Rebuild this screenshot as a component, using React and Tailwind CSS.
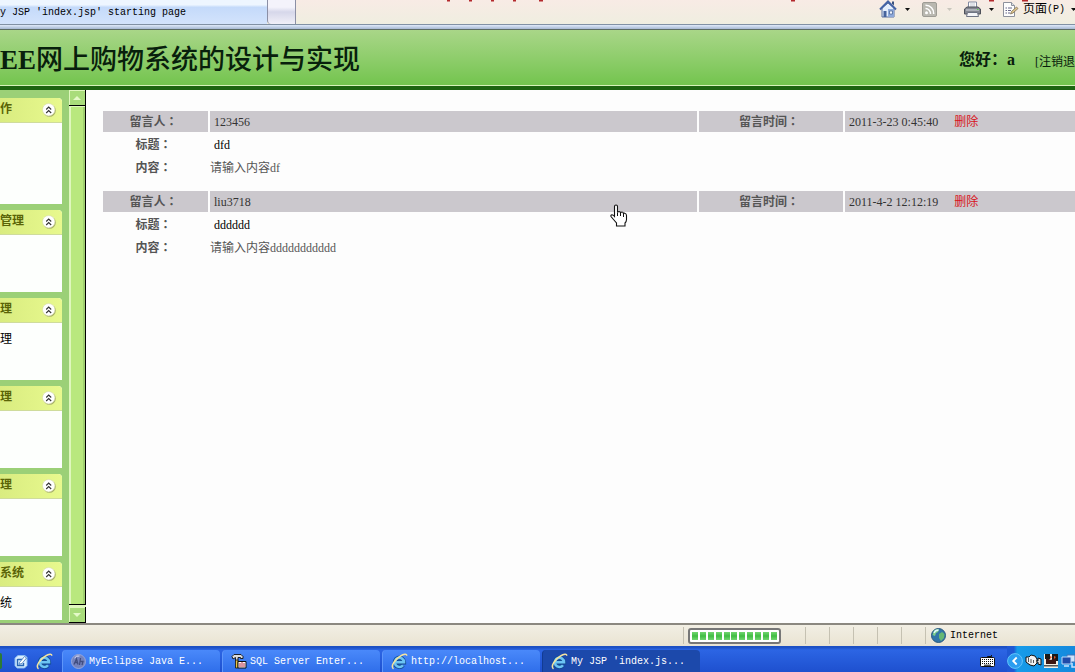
import React from "react";

const cjk = "font-['Liberation_Serif','Noto_Sans_CJK_SC',serif]";
const mono = "font-['Liberation_Mono','Noto_Sans_CJK_SC',monospace]";

function HomeIcon() {
  return (
    <svg width="18" height="18" viewBox="0 0 18 18" aria-hidden="true">
      <path d="M3 8v9h12V8L9 3z" fill="#e4eefc" stroke="#5b6f9d" />
      <path d="M9 9h6v8H9z" fill="#8ea9da" />
      <path d="M1 9.5 9 1.5l8 8" fill="none" stroke="#4463a5" strokeWidth="2" />
      <path d="M13 1.500h2v4l-2-2z" fill="#39517f" />
      <path d="M4.500 11h3v6h-3z" fill="#46639c" />
      <path d="M10.500 11h3v3h-3z" fill="#f4f8ff" stroke="#4f6898" strokeWidth=".8" />
    </svg>
  );
}

function FeedIcon() {
  return (
    <svg width="15" height="15" viewBox="0 0 15 15" aria-hidden="true">
      <rect x=".5" y=".5" width="14" height="14" rx="1.500" fill="#b9b8b0" stroke="#9d9c95" />
      <circle cx="4.500" cy="10.700" r="1.500" fill="#fff" />
      <path d="M3.500 6.500a5 5 0 0 1 5 5.500M3.500 3.300a8 8 0 0 1 8.200 8.700" fill="none" stroke="#fff" strokeWidth="1.500" />
    </svg>
  );
}

function PrinterIcon() {
  return (
    <svg width="17" height="17" viewBox="0 0 17 17" aria-hidden="true">
      <path d="M4.500 1h8v6h-8z" fill="#fff" stroke="#8189a0" />
      <path d="M6 3h5M6 5h5" stroke="#aeb5c4" strokeWidth=".8" />
      <path d="M.5 8 3 6h11l2.500 2v5H.5z" fill="#83868f" stroke="#4d505a" />
      <path d="M2 9h13" stroke="#d5d8e0" />
      <path d="M3.500 11.500h10l1 4h-12z" fill="#f4f5f8" stroke="#6e7484" />
      <path d="M13 8.500h1.500" stroke="#5ad04e" />
    </svg>
  );
}

function PageIcon() {
  return (
    <svg width="17" height="17" viewBox="0 0 17 17" aria-hidden="true">
      <path d="M1.500 1.500h8l3 3v11h-11z" fill="#fdfdfd" stroke="#8d919c" />
      <path d="M9.500 1.500v3h3" fill="#dde1e8" stroke="#8d919c" />
      <path d="M3.500 7h1.500M6 7h4M3.500 9.500h1.500M6 9.500h3M3.500 12h1.500M6 12h2" stroke="#668" />
      <path d="m8.500 13 1-2.500 5-4.500 1.500 1.500-5 4.500z" fill="#dfc58a" stroke="#7d705a" strokeWidth=".8" />
    </svg>
  );
}

function Caret({ faded }) {
  return (
    <svg width="5" height="3" viewBox="0 0 5 3" aria-hidden="true">
      <path d="M0 0h5L2.500 3z" fill={faded ? "#c9c6bd" : "#111"} />
    </svg>
  );
}

function IeIcon() {
  return (
    <svg width="17" height="17" viewBox="0 0 17 17" aria-hidden="true">
      <path d="M4.500 9.300H13A4.600 4.600 0 1 0 12 12.200" fill="none" stroke="#12488f" strokeWidth="4.200" />
      <path d="M4.500 9.300H13A4.600 4.600 0 1 0 12 12.200" fill="none" stroke="#6cc4f4" strokeWidth="2.600" />
      <path d="M2.500 15.800C-.8 13.500 4 6 9.500 3c3-1.800 6.800-2.800 6-.2" fill="none" stroke="#f3e3a0" strokeWidth="1.500" />
    </svg>
  );
}

function DesktopIcon() {
  return (
    <svg width="14" height="15" viewBox="0 0 14 15" aria-hidden="true">
      <path d="M1 4 4 1.500h7l2 2v8L10.500 14H3l-2-2.500z" fill="#d9edff" stroke="#8bbcf0" />
      <path d="M3.500 5.500h5M3.500 5v6.500h6V9" fill="none" stroke="#2766b5" strokeWidth="1.400" />
      <path d="M5.500 8.500 10.500 2.500l2 1.500L8 9.500l-3 .8z" fill="#fff" stroke="#3973bb" strokeWidth=".8" />
    </svg>
  );
}

function EclipseIcon() {
  return (
    <svg width="15" height="15" viewBox="0 0 15 15" aria-hidden="true">
      <circle cx="7.500" cy="7.500" r="7" fill="#7382bd" stroke="#98a6d9" />
      <path d="M3 10.500 5.500 5l1.500 5.500M4 8.500h3M8.500 11l1-7M8.500 7.500h3.500l-1 3.500" fill="none" stroke="#404d80" strokeWidth="1.300" />
      <path d="M3.500 4a5 5 0 0 1 5-2" fill="none" stroke="#e1e7fa" />
    </svg>
  );
}

function SqlIcon() {
  return (
    <svg width="16" height="16" viewBox="0 0 16 16" aria-hidden="true">
      <path d="M1 3.500 3 1.500h7l2 2v2H9.500v-1H7v3H4.500v-3L2 6z" fill="#ddd" stroke="#111" strokeWidth=".9" />
      <path d="M4.500 7H7v8H4.500z" fill="#e8c545" stroke="#111" strokeWidth=".8" />
      <path d="M7 8.500h8V15H7z" fill="#fff" stroke="#111" />
      <path d="M9 10v4M11 9v5M13 10v4" stroke="#b52a45" />
    </svg>
  );
}

function GlobeIcon() {
  return (
    <svg width="15" height="15" viewBox="0 0 15 15" aria-hidden="true">
      <circle cx="7.500" cy="7.500" r="7" fill="#3176a8" stroke="#28587f" />
      <path d="M3 2.500c2-1.500 4-1.500 5-1L7 4 5 5 4 8 1.500 7z" fill="#7ed08a" />
      <path d="M8 6l3-2 2.500 2-.5 4-3 3L8 10z" fill="#65b874" />
      <path d="M3 5c1-2.500 3-3 4.500-3" fill="none" stroke="#e0f7ff" strokeWidth="1.300" />
    </svg>
  );
}

function KeyboardIcon() {
  return (
    <svg width="15" height="12" viewBox="0 0 15 12" aria-hidden="true">
      <path d="M7.500 3V1.500h4V0" fill="none" stroke="#111" />
      <rect x=".5" y="2.500" width="14" height="9" rx="1" fill="#fff" stroke="#111" />
      <path d="M2 4.500h11M2 6.500h11M2 8.500h11" stroke="#111" strokeDasharray="1 1" />
      <path d="M4 10.200h7" stroke="#111" />
    </svg>
  );
}

function TrayIcons() {
  return (
    <svg width="50" height="17" viewBox="0 0 50 17" aria-hidden="true">
      <path d="M1 4h3l2-2 4 1 2 3v4l-3 3-4-1-4-3z" fill="#f2f2f2" stroke="#111" />
      <path d="M3.500 5v4M6 6v4M8.500 7v3" stroke="#555" />
      <path d="M11 8h2V5l3 1v6l-3-1V9" fill="#ddd" stroke="#111" />
      <path d="M19 1h14v14H19z" fill="#f2eee2" />
      <path d="M20 1h5v5h-5zM27 1h6v7h-6z" fill="#191919" />
      <path d="M21 5l5 2 5-3v7H21z" fill="#3c1612" />
      <path d="M19 12h14v1.500H19z" fill="#555" />
      <path d="m25 3 2 1-2 2zM29 3l2 1-2 2z" fill="#e35425" />
      <path d="M42 2h8v7h-8z" fill="#cfe4fa" stroke="#4372b7" />
      <path d="M37 4h9v7h-9z" fill="#1f4baa" stroke="#bddafa" />
      <path d="M39 13h5M47 10v4h3" stroke="#c9e2ff" strokeWidth="1.500" fill="none" />
    </svg>
  );
}

function HandCursor() {
  return (
    <svg className="absolute left-[610px] top-[204px]" width="18" height="23" viewBox="0 0 18 23" aria-hidden="true">
      <path
        d="M4.500 12.500V2.500Q4.500 1 6 1t1.500 1.500v6q0-1 1.500-1t1.500 1.500q0-1 1.500-1T13.500 10q0-1 1.200-.8 1.800.3 1.800 2.300v4q0 2-1.500 3.500v3H6.500V19L3.500 15.500 1 12.500q-.5-1.500 1-1.700 1.200 0 2.500 1.700z"
        fill="#fff"
        stroke="#111"
        strokeWidth="1.100"
      />
      <path d="M7.500 8.500V12M10.500 9v3M13.500 10v3" stroke="#111" />
    </svg>
  );
}

function TopBar() {
  return (
    <div className="relative flex h-[30px] shrink-0 flex-col border-b border-[#5b6b62]">
      <div className="flex h-6 min-h-0 grow bg-gradient-to-b from-[#f8ebe5] to-[#efeee0]">
        <button
          type="button"
          className={`${mono} flex w-[267px] items-center bg-gradient-to-b from-[#eef6ff] from-20% via-[#c4dafa] via-30% to-[#d3e3fc] text-left text-[10px] whitespace-pre text-black`}
        >
          {"y JSP 'index.jsp' starting page"}
        </button>
        <button
          type="button"
          aria-label="New tab"
          className="w-[29px] rounded-bl-sm border-x border-[#8b8fa5] bg-gradient-to-b from-[#f4f3fb] from-30% via-[#d6d7ea] via-50% to-[#f1f0f8]"
        />
        <div className="flex grow items-start justify-end overflow-hidden">
          <div className="flex h-[18px] items-center">
            <button type="button" aria-label="Home" className="mr-2"><HomeIcon /></button>
            <Caret />
            <button type="button" aria-label="Feeds" className="mr-2.5 ml-3"><FeedIcon /></button>
            <Caret faded />
            <button type="button" aria-label="Print" className="mr-2 ml-3"><PrinterIcon /></button>
            <Caret />
            <button type="button" className={`${mono} ml-2 flex items-center gap-1 text-[12px] leading-4 text-black`}>
              <PageIcon />
              <span className="flex items-center pt-0.5">页面<span className="text-[10px]">(P)</span></span>
            </button>
            <span className="ml-1.5 w-1 overflow-hidden"><Caret /></span>
          </div>
        </div>
      </div>
      <div className="h-[5px] shrink-0 border-t border-[#8191a4] bg-gradient-to-b from-[#dfeafa] to-[#a6b8d2]" />
      <svg className="absolute top-0 left-[440px]" width="600" height="3" viewBox="0 0 600 3" aria-hidden="true">
        <path d="M7 0h3M29 0h3M51 0h3M73 0h3M99 0h4M351 0h4M549 0h5M582 0h6" stroke="#b3282c" strokeWidth="3" />
      </svg>
    </div>
  );
}

function Banner() {
  return (
    <header className={`${cjk} flex h-[60px] shrink-0 items-center justify-between overflow-hidden border-b-4 border-[#1d6410] bg-gradient-to-b from-[#a9d688] to-[#72c44c] pt-1 text-[#08200c] shadow-[inset_0_-1px_0_#d5f2b8]`}>
      <h1 className="text-[27px] leading-8 font-medium whitespace-nowrap">
        <span className="font-bold">EE</span>网上购物系统的设计与实现
      </h1>
      <div className="flex items-center gap-5 whitespace-nowrap">
        <span className="text-base font-bold">您好：a</span>
        <a href="#logout" className="pt-1 text-xs">[注销退</a>
      </div>
    </header>
  );
}

const panels = [
  { title: "作", size: "h-[106px]" },
  { title: "管理", size: "h-[82px]" },
  { title: "理", size: "h-[82px]", item: "理" },
  { title: "理", size: "h-[82px]" },
  { title: "理", size: "h-[82px]" },
  { title: "系统", size: "h-[58px]", item: "统" },
];

function Panel({ title, size, item }) {
  return (
    <section className={`${size} shrink-0 overflow-hidden rounded-tr bg-[#fdfffd]`}>
      <div className="flex h-[25px] items-center justify-between border-b border-[#cfdc9c] bg-gradient-to-r from-[#d9ec80] to-[#e8f98e] pr-1.5">
        <h2 className="pb-0.5 text-xs font-bold text-[#5a6407]">{title}</h2>
        <button type="button" aria-label={`收起${title}`} className="rounded-full">
          <svg width="14" height="14" viewBox="0 0 14 14" aria-hidden="true">
            <circle cx="7.500" cy="7.500" r="6.300" fill="#a5ae6b" />
            <circle cx="6.700" cy="6.700" r="6.200" fill="#fff" stroke="#d6dba9" strokeWidth=".6" />
            <path d="m4.200 6.500 2.500-2.500 2.500 2.500M4.200 10l2.500-2.500L9.200 10" fill="none" stroke="#333" strokeWidth="1.100" />
          </svg>
        </button>
      </div>
      {item && <a href="#item" className="block pt-2 text-xs leading-4 text-black">{item}</a>}
    </section>
  );
}

function ScrollArrow({ down }) {
  return (
    <button
      type="button"
      aria-label={down ? "Scroll down" : "Scroll up"}
      className="flex h-4 shrink-0 items-center justify-center border-r border-b border-black bg-[#a9dc7b] shadow-[inset_1px_1px_0_#dff7bd]"
    >
      <svg width="8" height="4" viewBox="0 0 8 4" aria-hidden="true">
        <path d={down ? "M0 0h8L4 4z" : "M0 4h8L4 0z"} fill="#e4f9c8" />
      </svg>
    </button>
  );
}

function Sidebar() {
  return (
    <aside className={`${cjk} flex w-[86px] shrink-0 bg-[#9bd077]`}>
      <nav className="mr-[7px] flex w-[62px] flex-col gap-1.5 overflow-hidden pt-2">
        {panels.map((p, i) => <Panel key={i} {...p} />)}
      </nav>
      <div className="flex grow flex-col">
        <ScrollArrow />
        <div className="grow border-r border-b border-black bg-[#b9e87e] shadow-[inset_2px_1px_0_#dff7bd,inset_-2px_0_0_#a0cf70]" />
        <div className="h-0.5 bg-[#dff7bd]" />
        <ScrollArrow down />
      </div>
    </aside>
  );
}

const messages = [
  { author: "123456", time: "2011-3-23 0:45:40", title: "dfd", body: "请输入内容df" },
  { author: "liu3718", time: "2011-4-2 12:12:19", title: "dddddd", body: "请输入内容ddddddddddd" },
];

function Message({ author, time, title, body }) {
  const label = "p-0 pr-1 pb-0.5 text-center font-['Noto_Sans_CJK_TC',sans-serif] font-bold text-[#555]";
  return (
    <table className="w-full table-fixed border-separate border-spacing-0.5 text-xs leading-4">
      <colgroup>
        <col className="w-[105px]" />
        <col />
        <col className="w-[144px]" />
        <col className="w-[230px]" />
      </colgroup>
      <tbody>
        <tr className="h-[21px] bg-[#cbc8cd] text-[#333]">
          <th scope="row" className={label}>留言人：</th>
          <td className="p-0 pl-1">{author}</td>
          <th scope="row" className={label}>留言时间：</th>
          <td className="p-0 pl-1 whitespace-nowrap">
            {time}
            <a href="#delete" className="ml-4 text-[#d8131b]">删除</a>
          </td>
        </tr>
        <tr className="h-[21px] text-black">
          <th scope="row" className={label}>标题：</th>
          <td colSpan={3} className="p-0 pl-1">{title}</td>
        </tr>
        <tr className="h-[21px] text-[#555]">
          <th scope="row" className={label}>内容：</th>
          <td colSpan={3} className="p-0">{body}</td>
        </tr>
      </tbody>
    </table>
  );
}

function StatusBar() {
  return (
    <footer className="flex h-[23px] shrink-0 items-stretch justify-end border-t-2 border-[#8b8880] bg-gradient-to-b from-[#f2efe4] to-[#e9e3d2]">
      <div className="my-0.5 flex items-center border-l border-[#c5c1b2] pl-1">
        <div role="progressbar" aria-label="Loading" className="flex h-4 w-[93px] justify-between rounded-[3px] border-2 border-[#777] bg-white p-0.5">
          {Array.from({ length: 11 }, (_, i) => (
            <span key={i} className="w-1.5 bg-gradient-to-b from-[#72d670] via-[#3fbd42] to-[#72d670]" />
          ))}
        </div>
      </div>
      <div className="my-0.5 flex pl-6">
        {Array.from({ length: 5 }, (_, i) => (
          <span key={i} className="w-6 border-l border-[#c5c1b2]" />
        ))}
      </div>
      <div className={`${mono} my-0.5 flex w-[150px] items-center gap-1 border-l border-[#c5c1b2] pl-[5px] text-[10px] text-black`}>
        <GlobeIcon />
        Internet
      </div>
    </footer>
  );
}

const tasks = [
  { text: "MyEclipse Java E...", icon: <EclipseIcon /> },
  { text: "SQL Server Enter...", icon: <SqlIcon /> },
  { text: "http://localhost...", icon: <IeIcon /> },
  { text: "My JSP 'index.js...", icon: <IeIcon />, active: true },
];

function Taskbar() {
  return (
    <div className={`${mono} flex h-[26px] shrink-0 items-stretch overflow-hidden bg-gradient-to-b from-[#1c50c4] from-5% via-[#2c65e4] via-15% to-[#1e50cf]`}>
      <div className="flex w-[62px] shrink-0 items-center gap-2 pt-1">
        <span className="mr-1 h-4 w-0.5 rounded-r-full bg-[#2c7a34]" />
        <button type="button" aria-label="Desktop"><DesktopIcon /></button>
        <button type="button" aria-label="Browser"><IeIcon /></button>
      </div>
      <div className="flex min-w-0 gap-0.5 pt-1">
        {tasks.map((t) => (
          <button
            key={t.text}
            type="button"
            className={`flex w-[158px] items-center gap-[3px] rounded-t-sm border-l pl-2 text-[10px] whitespace-nowrap text-white ${
              t.active ? "border-[#123b93] bg-[#1c49ab]" : "border-[#5e96fa] bg-gradient-to-b from-[#4a89fa] to-[#2f6eea]"
            }`}
          >
            {t.icon}
            {t.text}
          </button>
        ))}
      </div>
      <div className="ml-auto flex shrink-0 items-center">
        <span className="mr-3 pt-1"><KeyboardIcon /></span>
        <div className="flex h-full items-center bg-gradient-to-r from-[#1f58d4] from-10% via-[#169be9] via-15% to-[#1489dd] pt-1">
          <button type="button" aria-label="Expand tray" className="mr-0.5">
            <svg width="16" height="16" viewBox="0 0 16 16" aria-hidden="true">
              <circle cx="8" cy="8" r="7.400" fill="#2a9df0" stroke="#62c3fa" />
              <path d="M9.700 4.500 6.200 8l3.500 3.500" fill="none" stroke="#fff" strokeWidth="1.800" />
            </svg>
          </button>
          <TrayIcons />
        </div>
      </div>
    </div>
  );
}

export default function App() {
  return (
    <div className="relative flex min-h-screen flex-col overflow-hidden bg-[#fdfdfd]">
      <TopBar />
      <Banner />
      <div className="flex grow">
        <Sidebar />
        <main className={`${cjk} flex min-w-0 grow flex-col gap-[9px] overflow-hidden pt-[19px] pl-[15px]`}>
          {messages.map((m) => (
            <div key={m.author} className="-mr-0.5"><Message {...m} /></div>
          ))}
        </main>
      </div>
      <StatusBar />
      <Taskbar />
      <HandCursor />
    </div>
  );
}
